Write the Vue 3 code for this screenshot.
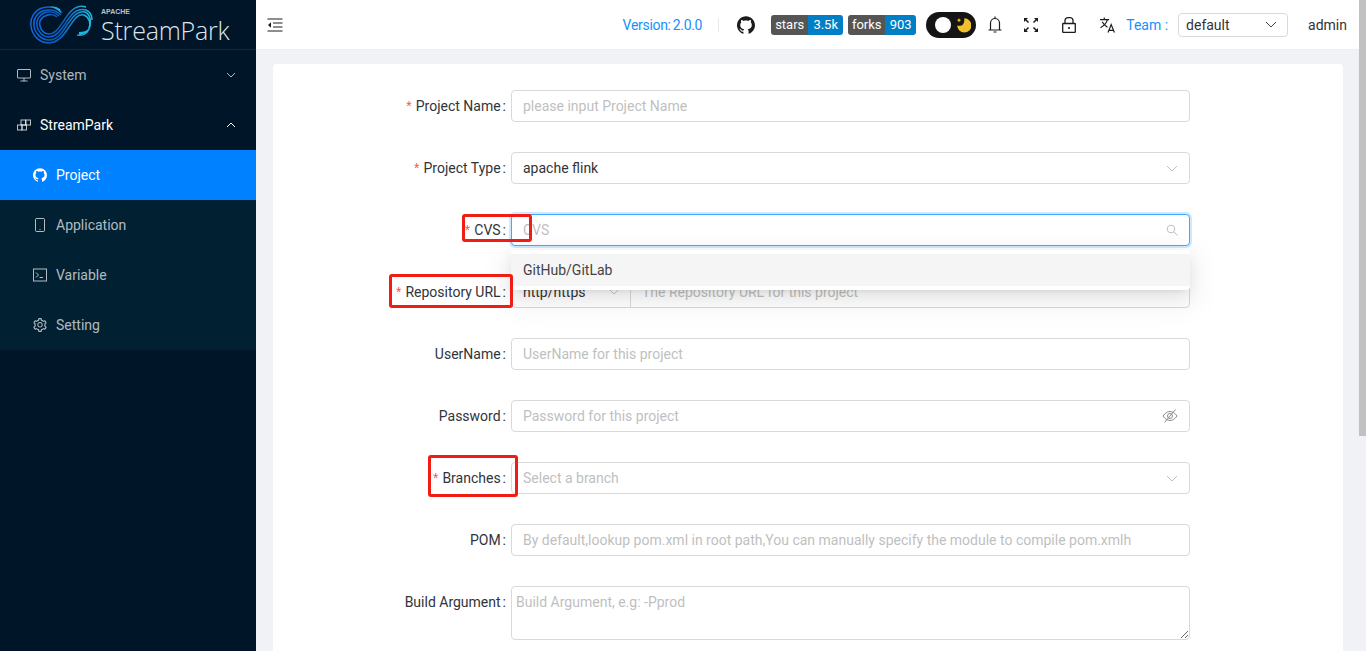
<script setup>
const gh = 'M511.6 76.3C264.3 76.2 64 276.4 64 523.5 64 718.9 189.3 885 363.8 946c23.5 5.9 19.9-10.8 19.9-22.2v-77.5c-135.7 15.9-141.2-73.9-150.3-88.9C215 726 171.5 718 184.5 703c30.9-15.9 62.4 4 98.9 57.9 26.4 39.1 77.9 32.5 104 26 5.7-23.5 17.9-44.5 34.7-60.8-140.6-25.2-199.2-111-199.2-213 0-49.5 16.3-95 48.3-131.7-20.4-60.5 1.9-112.3 4.9-120 58.1-5.2 118.5 41.6 123.2 45.3 33-8.9 70.7-13.6 112.9-13.6 42.4 0 80.2 4.9 113.5 13.9 11.3-8.6 67.3-48.8 121.3-43.9 2.9 7.7 24.7 58.3 5.5 118 32.4 36.8 48.9 82.7 48.9 132.3 0 102.2-59 188.1-200 212.9a127.5 127.5 0 0 1 38.1 91v112.5c.8 9 0 17.9 15 17.9 177.1-59.7 304.6-227 304.6-424.1 0-247.2-200.4-447.3-447.5-447.3z'
const gear = 'M924.8 625.7l-65.5-56c3.1-19 4.7-38.4 4.7-57.8s-1.6-38.8-4.7-57.8l65.5-56a32.03 32.03 0 0 0 9.3-35.2l-.9-2.6a443.74 443.74 0 0 0-79.7-137.9l-1.8-2.1a32.12 32.12 0 0 0-35.1-9.5l-81.3 28.9c-30-24.6-63.5-44-99.7-57.6l-15.7-85a32.05 32.05 0 0 0-25.8-25.7l-2.7-.5c-52.1-9.4-106.9-9.4-159 0l-2.7.5a32.05 32.05 0 0 0-25.8 25.7l-15.8 85.4a351.86 351.86 0 0 0-99 57.4l-81.9-29.1a32 32 0 0 0-35.1 9.5l-1.8 2.1a446.02 446.02 0 0 0-79.7 137.9l-.9 2.6c-4.5 12.5-.8 26.5 9.3 35.2l66.3 56.6c-3.1 18.8-4.6 38-4.6 57.1 0 19.2 1.5 38.4 4.6 57.1L99 625.5a32.03 32.03 0 0 0-9.3 35.2l.9 2.6c18.1 50.4 44.9 96.9 79.7 137.9l1.8 2.1a32.12 32.12 0 0 0 35.1 9.5l81.9-29.1c29.8 24.5 63.1 43.9 99 57.4l15.8 85.4a32.05 32.05 0 0 0 25.8 25.7l2.7.5a449.4 449.4 0 0 0 159 0l2.7-.5a32.05 32.05 0 0 0 25.8-25.7l15.7-85a350 350 0 0 0 99.7-57.6l81.3 28.9a32 32 0 0 0 35.1-9.5l1.8-2.1c34.8-41.1 61.6-87.5 79.7-137.9l.9-2.6c4.5-12.3.8-26.3-9.3-35zM788.3 465.9c2.5 15.1 3.8 30.6 3.8 46.1s-1.3 31-3.8 46.1l-6.6 40.1 74.7 63.9a370.03 370.03 0 0 1-42.6 73.6L721 702.8l-31.4 25.8c-23.9 19.6-50.5 35-79.3 45.8l-38.1 14.3-17.9 97a377.5 377.5 0 0 1-85 0l-17.9-97.2-37.8-14.5c-28.5-10.8-55-26.2-78.7-45.7l-31.4-25.9-93.4 33.2c-17-22.9-31.2-47.6-42.6-73.6l75.5-64.5-6.5-40c-2.4-14.9-3.7-30.3-3.7-45.5 0-15.3 1.2-30.6 3.7-45.5l6.5-40-75.5-64.5c11.3-26.1 25.6-50.7 42.6-73.6l93.4 33.2 31.4-25.9c23.7-19.5 50.2-34.9 78.7-45.7l37.9-14.3 17.9-97.2c28.1-3.2 56.8-3.2 85 0l17.9 97 38.1 14.3c28.7 10.8 55.4 26.2 79.3 45.8l31.4 25.8 92.8-32.9c17 22.9 31.2 47.7 42.6 73.6L781.8 426l6.5 39.9zM512 326c-97.2 0-176 78.8-176 176s78.8 176 176 176 176-78.8 176-176-78.8-176-176-176zm79.2 255.2A111.6 111.6 0 0 1 512 614c-29.9 0-58-11.7-79.2-32.8A111.6 111.6 0 0 1 400 502c0-29.9 11.7-58 32.8-79.2C454 401.6 482.1 390 512 390c29.9 0 58 11.6 79.2 32.8A111.6 111.6 0 0 1 624 502c0 29.9-11.7 58-32.8 79.2z'

const rows = [
  { label: 'Project Name', req: true, ph: 'please input Project Name' },
  { label: 'Project Type', req: true, value: 'apache flink', icon: 'down' },
  { label: 'CVS', req: true, ph: 'CVS', icon: 'search', focus: true },
  { label: 'Repository URL', req: true, ph: 'The Repository URL for this project', addon: 'http/https' },
  { label: 'UserName', ph: 'UserName for this project' },
  { label: 'Password', ph: 'Password for this project', icon: 'eye' },
  { label: 'Branches', req: true, ph: 'Select a branch', icon: 'down' },
  { label: 'POM', ph: 'By default,lookup pom.xml in root path,You can manually specify the module to compile pom.xmlh' },
]
const subItems = ['Project', 'Application', 'Variable', 'Setting']
</script>

<template>
  <div class="app">
    <aside class="side">
      <div class="logo">
        <svg class="logo-mark" width="64" height="42" viewBox="0 0 64 42" fill="none">
          <defs>
            <linearGradient id="lg" x1="0" y1="0" x2="1" y2="0">
              <stop offset="0" stop-color="#1266dc" />
              <stop offset="0.5" stop-color="#0d5ab8" />
              <stop offset="1" stop-color="#22b8de" />
            </linearGradient>
          </defs>
          <g stroke="url(#lg)" fill="none" stroke-width="1.5">
            <path d="M33 9C28 3 20 2 13 4 5 7 1 14 2 22c1 9 8 17 18 17 9 0 15-8 20-16 5-7 9-14 15-12 5 2 7 8 5 14-2 5-7 7-12 6" />
            <path d="M32 11C27 6 20 5 14 7 8 9 4 15 5 22c1 7 7 14 15 14 8 0 13-7 18-15 5-7 10-15 18-13 5 2 7 10 4 16" />
            <path d="M30 12C26 8 20 7 15 9 10 11 7 16 8 22c1 6 6 11 12 11 7 0 11-6 16-13 5-8 11-17 21-14 5 2 6 6 6 10" />
            <path d="M28 13C25 10 20 10 16 12 12 14 10 18 11 22c1 5 5 8 9 8 6 0 9-5 14-12 5-8 12-19 23-15" />
          </g>
          <path d="M31 5c-4-3-8-3-11-2 5 0 9 3 12 6zM50 31c4 0 9-2 10-7-2 3-6 4-10 4z" fill="#1fb6dd" />
        </svg>
        <div class="logo-text">
          <span class="apache">APACHE</span>
          <span class="brand">StreamPark</span>
        </div>
      </div>

      <div class="menu-row">
        <svg class="mi" viewBox="0 0 14 14" fill="none" stroke="currentColor"><rect x=".5" y="1.500" width="13" height="8.500" rx=".5" /><path d="M7 10v3M3.500 13h7" /></svg>
        <span class="menu-label">System</span>
        <svg class="chev" viewBox="0 0 10 6" fill="none" stroke="currentColor" stroke-width="1"><path d="M1 1l4 4 4-4" /></svg>
      </div>
      <div class="menu-row open">
        <svg class="mi" viewBox="0 0 14 14" fill="none" stroke="currentColor"><rect x=".5" y="7" width="4.500" height="5" /><rect x="5" y="7" width="4.500" height="5" /><rect x="4" y="2" width="4.500" height="5" /><rect x="9" y="2" width="4.500" height="5" /></svg>
        <span class="menu-label">StreamPark</span>
        <svg class="chev" viewBox="0 0 10 6" fill="none" stroke="currentColor" stroke-width="1"><path d="M1 5l4-4 4 4" /></svg>
      </div>
      <div class="sub">
        <div v-for="(s, i) in subItems" :key="s" class="sub-row" :class="{ active: i === 0 }">
          <svg v-if="i === 0" class="mi" viewBox="64 64 896 896" fill="currentColor"><path :d="gh" /></svg>
          <svg v-else-if="i === 1" class="mi" viewBox="0 0 14 14" fill="none" stroke="currentColor"><rect x="2.500" y=".5" width="9" height="13" rx="1" /><path d="M6.500 11.500h1" /></svg>
          <svg v-else-if="i === 2" class="mi" viewBox="0 0 14 14" fill="none" stroke="currentColor"><rect x=".5" y="1" width="13" height="12" /><path d="M3 4.500L5.500 7 3 9.500M6.500 9.500H10" /></svg>
          <svg v-else class="mi" viewBox="64 64 896 896" fill="currentColor"><path :d="gear" /></svg>
          <span>{{ s }}</span>
        </div>
      </div>
    </aside>

    <div class="main">
      <header class="head">
        <svg class="collapse" viewBox="0 0 16 14" fill="none" stroke="#1c1c1c" stroke-width="1.2"><path d="M.5 1h15M6 5h9.500M6 9h9.500M.5 13h15" /><path d="M4 4.300L1 7l3 2.700z" fill="#1c1c1c" stroke="none" /></svg>
        <span class="spacer"></span>
        <span class="version">Version:<span class="ver-num">2.0.0</span></span>
        <i class="vdiv"></i>
        <svg class="gh" viewBox="64 64 896 896" fill="#1c1c1c"><path :d="gh" /></svg>
        <span class="badge"><b class="bl w37">stars</b><b class="br w35">3.5k</b></span>
        <span class="badge second"><b class="bl w37">forks</b><b class="br w31">903</b></span>
        <span class="toggle">
          <i class="knob"></i>
          <svg class="moon" viewBox="0 0 18 18"><path d="M10.500 1.500a8 8 0 1 1-8 8Q11 12 10.500 1.500z" fill="#f0c12a" /><path d="M4.500 1l.8 1.800L7 3.500 5.300 4.400 4.500 6.200 3.700 4.400 2 3.500 3.700 2.800z" fill="#f0c12a" /></svg>
        </span>
        <svg class="hi bell" viewBox="0 0 14 17" fill="none" stroke="#1c1c1c" stroke-width="1.200"><path d="M.5 14h13M2.500 14V7a4.500 4.500 0 0 1 9 0v7M7 .5v2M5.500 16h3" /></svg>
        <svg class="hi full" viewBox="0 0 14 14" fill="none" stroke="#1c1c1c" stroke-width="1.500"><path d="M1.500 1.500l3 3M12.500 1.500l-3 3M1.500 12.500l3-3M12.500 12.500l-3-3" /><path d="M0 4V0h4zM14 4V0h-4zM0 10v4h4zM14 10v4h-4z" fill="#1c1c1c" stroke="none" /></svg>
        <svg class="hi lock" viewBox="0 0 14 16" fill="none" stroke="#1c1c1c" stroke-width="1.300"><rect x=".7" y="6.500" width="12.600" height="8.800" rx=".6" /><path d="M3 6.500V3.500a3 2.800 0 0 1 3-2.800h2a3 2.800 0 0 1 3 2.800v3" /><path d="M7 10v2" stroke-width="1.600" /></svg>
        <svg class="hi trans" viewBox="0 0 15 15" fill="none" stroke="#1c1c1c" stroke-width="1.100"><path d="M0 2.500h8.500M4 .5v2M7 2.500c-.8 3-3 5.500-6.500 7.500M2 4.500c1 2 3 3.700 5 5M7.500 14.500l3-7.500 3 7.500M8.500 12.500h4" /></svg>
        <span class="team">Team :</span>
        <span class="team-select"><span>default</span><svg viewBox="0 0 12 7" fill="none" stroke="#444" stroke-width="1"><path d="M1 1l5 5 5-5" /></svg></span>
        <span class="admin">admin</span>
      </header>

      <div class="content">
        <div class="card">
          <div v-for="r in rows" :key="r.label" class="row">
            <label class="lab"><span v-if="r.req" class="star">*</span>{{ r.label }}<span class="colon">:</span></label>
            <div class="field" :class="{ focus: r.focus }">
              <span v-if="r.addon" class="addon">{{ r.addon }}<svg class="ic-down small" viewBox="0 0 12 7" fill="none" stroke="#bbb" stroke-width="1"><path d="M1 1l5 5 5-5" /></svg></span>
              <span class="val" :class="{ ph: !r.value }">{{ r.value || r.ph }}</span>
              <svg v-if="r.icon === 'down'" class="ic-down" viewBox="0 0 12 7" fill="none" stroke="#bfbfbf" stroke-width="1"><path d="M1 1l5 5 5-5" /></svg>
              <svg v-if="r.icon === 'search'" class="ic-s" viewBox="0 0 12 12" fill="none" stroke="#bfbfbf" stroke-width="1"><circle cx="5" cy="5" r="3.800" /><path d="M8 8l3.500 3.500" /></svg>
              <svg v-if="r.icon === 'eye'" class="ic-e" viewBox="0 0 16 14" fill="none" stroke="#8c8c8c" stroke-width="1"><path d="M1 7c2-3 4.500-4.500 7-4.500S13 4 15 7c-2 3-4.500 4.500-7 4.500S3 10 1 7z" /><circle cx="8" cy="7" r="2.500" /><path d="M2.500 13.500L13.500.5" /></svg>
            </div>
          </div>
          <div class="row">
            <label class="lab">Build Argument<span class="colon">:</span></label>
            <textarea class="ta" placeholder="Build Argument, e.g: -Pprod"></textarea>
          </div>

          <div class="drop"><div class="drop-item">GitHub/GitLab</div></div>
          <i class="mark m1"></i>
          <i class="mark m2"></i>
          <i class="mark m3"></i>
        </div>
      </div>
    </div>
    <i class="thumb"></i>
  </div>
</template>

<style>
html, body { margin: 0; overflow: hidden; }
</style>

<style scoped>
.app {
  display: flex;
  width: 1366px;
  height: 651px;
  overflow: hidden;
  position: relative;
  font-family: Roboto, "Noto Sans", sans-serif;
  font-size: 14px;
  line-height: 20px;
  background: #f0f2f5;
}
.side {
  width: 256px;
  flex: none;
  background: #001528;
  color: rgba(255, 255, 255, 0.7);
}
.logo {
  height: 49px;
  border-bottom: 1px solid #14273a;
  display: flex;
  align-items: center;
  padding-left: 29px;
}
.logo-mark { flex: none; }
.logo-text {
  margin-left: 8px;
  display: flex;
  flex-direction: column;
  color: #dfe6ec;
}
.apache { font: 700 7px/10px "Liberation Sans", sans-serif; color: #b9c3cc; }
.brand { font: 300 25px/26px "Open Sans", sans-serif; letter-spacing: -.2px; }
.menu-row {
  height: 50px;
  display: flex;
  align-items: center;
  padding-left: 17px;
  padding-right: 20px;
}
.menu-row.open { color: #fff; }
.menu-row.open .mi { color: rgba(255, 255, 255, .75); }
.mi { width: 14px; height: 14px; flex: none; }
.menu-label { margin-left: 9px; flex: 1; }
.chev { width: 10px; height: 6px; }
.sub { background: #012133; }
.sub-row {
  height: 50px;
  display: flex;
  align-items: center;
  padding-left: 33px;
  gap: 9px;
}
.sub-row.active { background: #0081ff; color: #fff; }
.main { flex: 1; min-width: 0; display: flex; flex-direction: column; }
.head {
  height: 49px;
  flex: none;
  background: #fff;
  border-bottom: 1px solid #eee;
  display: flex;
  align-items: center;
  color: #333;
  padding-right: 19px;
}
.collapse { width: 16px; height: 14px; margin-left: 11px; flex: none; }
.spacer { flex: 1; }
.version { color: #1890ff; letter-spacing: -.3px; }
.ver-num { margin-left: 2px; }
.vdiv { width: 1px; height: 14px; background: #e8e8e8; margin-left: 16px; }
.gh { width: 18px; height: 18px; margin-left: 18px; flex: none; }
.badge {
  display: flex;
  height: 20px;
  margin-left: 16px;
  border-radius: 3px;
  overflow: hidden;
  font-size: 13px;
  line-height: 20px;
  color: #fff;
}
.badge.second { margin-left: 5px; }
.badge b { font-weight: 400; text-align: center; display: block; }
.bl { background: #555; }
.br { background: #007ec6; }
.w37 { width: 37px; }
.w35 { width: 35px; }
.w31 { width: 31px; }
.toggle {
  width: 50px;
  height: 26px;
  margin-left: 10px;
  background: #151515;
  border-radius: 13px;
  display: flex;
  align-items: center;
  flex: none;
}
.knob { width: 16px; height: 16px; border-radius: 50%; background: #fff; margin-left: 9px; }
.moon { width: 16px; height: 16px; margin-left: 4px; }
.hi { flex: none; }
.bell { width: 14px; height: 17px; margin-left: 12px; }
.full { width: 14px; height: 14px; margin-left: 22px; }
.lock { width: 14px; height: 16px; margin-left: 24px; }
.trans { width: 16px; height: 16px; margin-left: 24px; }
.team { color: #1890ff; margin-left: 10px; }
.team-select {
  width: 110px;
  height: 24px;
  box-sizing: border-box;
  border: 1px solid #d9d9d9;
  border-radius: 4px;
  margin-left: 10px;
  padding: 0 10px 0 7px;
  display: flex;
  align-items: center;
  justify-content: space-between;
  color: #333;
}
.team-select svg { width: 12px; height: 7px; }
.admin { margin-left: 20px; }
.content { flex: 1; min-height: 0; padding: 14px 23px 0 17px; overflow: hidden; }
.card {
  background: #fff;
  border-radius: 4px 4px 0 0;
  padding-top: 26px;
  height: 700px;
  position: relative;
}
.row {
  display: grid;
  grid-template-columns: 238px 679px;
  margin-bottom: 30px;
  color: #333;
}
.lab {
  height: 32px;
  display: flex;
  align-items: center;
  justify-content: flex-end;
  padding-right: 5px;
  white-space: nowrap;
  color: #30343b;
}
.star { color: #ff4d4f; margin-right: 4px; font-family: "Liberation Sans", sans-serif; }
.colon { margin-left: 2px; margin-right: 0; }
.field {
  height: 32px;
  box-sizing: border-box;
  border: 1px solid #d9d9d9;
  border-radius: 4px;
  display: flex;
  align-items: center;
  padding: 0 11px;
  background: #fff;
}
.field.focus { border-color: #40a9ff; box-shadow: 0 0 0 2px rgba(24, 144, 255, .2); }
.val { flex: 1; white-space: nowrap; overflow: hidden; }
.val.ph { color: #bfbfbf; }
.addon {
  width: 119px;
  flex: none;
  margin-left: -11px;
  margin-right: 11px;
  height: 30px;
  box-sizing: border-box;
  border-right: 1px solid #d9d9d9;
  padding-left: 11px;
  display: flex;
  align-items: center;
  justify-content: space-between;
  padding-right: 11px;
}
.ic-down { width: 12px; height: 7px; flex: none; }
.ic-down.small { width: 10px; height: 6px; }
.ic-s { width: 12px; height: 12px; flex: none; }
.ic-e { width: 16px; height: 14px; flex: none; }
.ta {
  height: 54px;
  box-sizing: border-box;
  border: 1px solid #d9d9d9;
  border-radius: 4px;
  padding: 5px 4px;
  font: inherit;
  line-height: 20px;
  resize: vertical;
  outline: none;
  width: 679px;
  margin: 0;
}
.ta::placeholder { color: #bfbfbf; }
.drop {
  position: absolute;
  left: 238px;
  top: 186px;
  width: 679px;
  box-sizing: border-box;
  padding: 4px 0;
  background: #fff;
  border-radius: 4px;
  box-shadow: 0 3px 6px -4px rgba(0,0,0,.12), 0 6px 16px 0 rgba(0,0,0,.08), 0 9px 28px 8px rgba(0,0,0,.05);
}
.drop-item { height: 32px; line-height: 32px; padding-left: 12px; background: #f5f5f5; color: #444; }
.mark { position: absolute; border: 3px solid #f01d14; border-radius: 3px; box-sizing: border-box; pointer-events: none; }
.m1 { left: 189px; top: 150px; width: 70px; height: 28px; }
.m2 { left: 116px; top: 210px; width: 124px; height: 34px; }
.m3 { left: 155px; top: 391px; width: 90px; height: 42px; }
.thumb {
  position: absolute;
  right: 0;
  top: 0;
  width: 7px;
  height: 436px;
  background: #c1c1c1;
}
</style>
